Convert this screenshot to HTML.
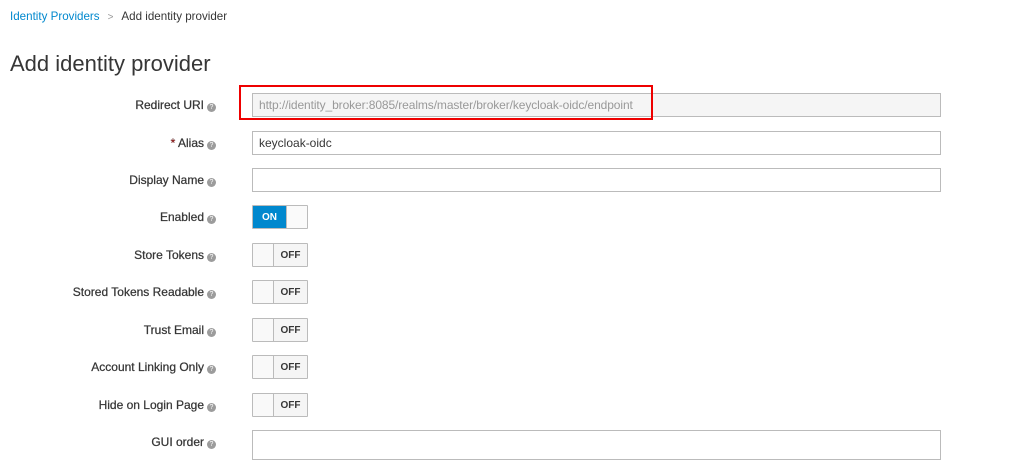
<!DOCTYPE html>
<html><head><meta charset="utf-8"><style>
body{margin:0;width:1024px;height:453px;overflow:hidden;background:#fff;font-family:"Liberation Sans",sans-serif;color:#363636;position:relative}
.a{position:absolute}
.bc{left:10px;top:10px;font-size:11.6px;color:#363636}
.bc span.l{color:#0088ce}
.bc span.s{color:#999;margin:0 8px;font-size:10px}
h1{position:absolute;left:10px;top:51px;margin:0;font-size:22px;font-weight:normal;color:#363636}
.lb{position:absolute;right:808px;font-size:12px;font-weight:normal;color:#363636;white-space:nowrap;height:14px;line-height:14px;-webkit-text-stroke:0.25px #363636}
.q{display:inline-block;width:9px;height:9px;border-radius:50%;background:#9c9c9c;color:#fff;font-size:7px;line-height:9px;text-align:center;margin-left:3px;vertical-align:0px;-webkit-text-stroke:0}
.in{position:absolute;left:252px;width:689px;height:24px;border:1px solid #bbb;box-sizing:border-box;font-size:12px;line-height:22px;padding-left:6px;color:#363636}
.tg{position:absolute;left:252px;width:56px;height:24px;border:1px solid #bbb;box-sizing:border-box;border-radius:1px;font-size:10px;font-weight:bold;background:#f5f5f5}
.tg .k{position:absolute;left:0;top:0;width:20px;height:22px;background:#f9f9f9;border-right:1px solid #bbb}
.tg .t{position:absolute;left:21px;right:0;top:1px;line-height:22px;text-align:center;color:#363636}
.on{background:#0088ce;border-color:#bbb}
.on .k{left:auto;right:0;border-right:none;border-left:1px solid #bbb;background:#fafafa;width:20px}
.on .t{left:0;right:21px;color:#fff}
</style></head><body>
<div class="a bc"><span class="l">Identity Providers</span><span class="s">&gt;</span>Add identity provider</div>
<h1>Add identity provider</h1>
<div class="lb" style="top:98px">Redirect URI<span class="q">?</span></div>
<div class="in" style="top:93px;background:#f5f5f5;color:#999;letter-spacing:-0.1px">http://identity_broker:8085/realms/master/broker/keycloak-oidc/endpoint</div>
<div class="a" style="left:239px;top:85px;width:414px;height:35px;border:2px solid #e00;box-sizing:border-box"></div>
<div class="lb" style="top:136px"><span style="color:#c00">*</span> Alias<span class="q">?</span></div>
<div class="in" style="top:131px">keycloak-oidc</div>
<div class="lb" style="top:173px">Display Name<span class="q">?</span></div>
<div class="in" style="top:168px"></div>
<div class="lb" style="top:210px">Enabled<span class="q">?</span></div>
<div class="tg on" style="top:205px"><div class="t">ON</div><div class="k"></div></div>
<div class="lb" style="top:248px">Store Tokens<span class="q">?</span></div>
<div class="tg" style="top:243px"><div class="k"></div><div class="t">OFF</div></div>
<div class="lb" style="top:285px">Stored Tokens Readable<span class="q">?</span></div>
<div class="tg" style="top:280px"><div class="k"></div><div class="t">OFF</div></div>
<div class="lb" style="top:323px">Trust Email<span class="q">?</span></div>
<div class="tg" style="top:318px"><div class="k"></div><div class="t">OFF</div></div>
<div class="lb" style="top:360px">Account Linking Only<span class="q">?</span></div>
<div class="tg" style="top:355px"><div class="k"></div><div class="t">OFF</div></div>
<div class="lb" style="top:398px">Hide on Login Page<span class="q">?</span></div>
<div class="tg" style="top:393px"><div class="k"></div><div class="t">OFF</div></div>
<div class="lb" style="top:435px">GUI order<span class="q">?</span></div>
<div class="in" style="top:430px;height:30px"></div>
</body></html>
